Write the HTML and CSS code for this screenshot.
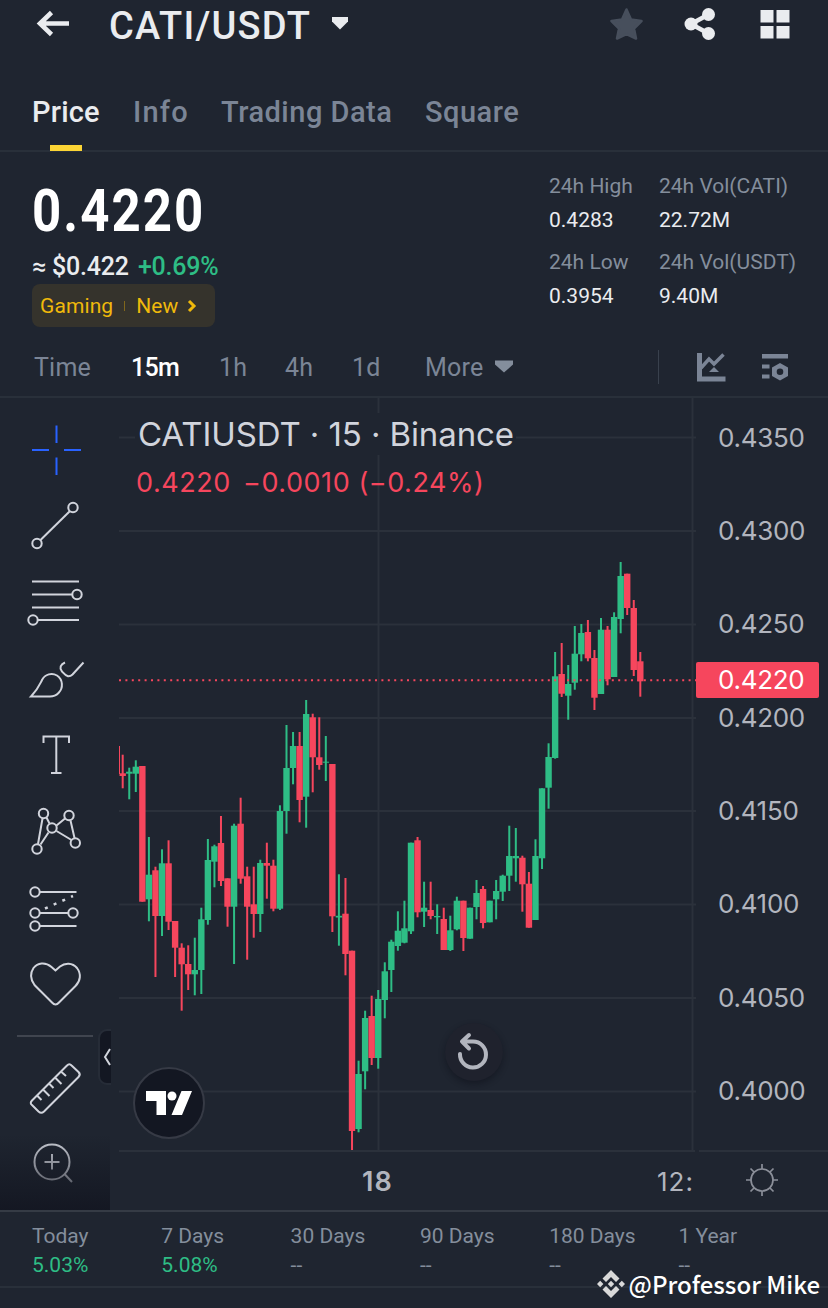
FILE: index.html
```html
<!DOCTYPE html>
<html lang="en">
<head>
    <meta charset="UTF-8">
    <meta name="viewport" content="width=device-width, initial-scale=1.0">
    <title>CATI/USDT</title>
    <link rel="stylesheet" href="styles.css">
</head>
<body>

<header class="topbar">
    <svg class="back" width="34" height="28" viewBox="36 10 34 28"><path d="M69 23.500H40M51.500 12.500L40 23.500L51.500 34.500" fill="none" stroke="#eaecef" stroke-width="4.600"/></svg>
    <h1 class="pair">CATI/USDT</h1>
    <svg class="caret" width="18" height="13" viewBox="0 0 18 13"><path d="M1 0H17V4.500L9 12.500L1 4.500Z" fill="#eaecef"/></svg>
    <div class="actions">
        <svg width="34" height="34" viewBox="609 8 34 34"><path d="M625.500 9.500L630 19.500L640.500 21L633 28.500L635 38.500L625.500 34L616 38.500L618 28.500L610.500 21L621 19.500Z" fill="#474f5c" stroke="#474f5c" stroke-width="2.500" stroke-linejoin="round"/></svg>
        <svg width="34" height="34" viewBox="684 8 34 34"><path d="M708.500 14.500L691 24L708.500 33.500" fill="none" stroke="#eaecef" stroke-width="4.500"/><g fill="#eaecef"><circle cx="708.500" cy="14.500" r="6.500"/><circle cx="691" cy="24" r="6.500"/><circle cx="708.500" cy="33.500" r="6.500"/></g></svg>
        <svg width="34" height="34" viewBox="758 8 34 34"><path d="M760.500 10H773.500V22.500H760.500ZM776.500 10H789.500V22.500H776.500ZM760.500 26H773.500V38.500H760.500ZM776.500 26H789.500V38.500H776.500Z" fill="#eaecef"/></svg>
    </div>
</header>

<nav class="tabs">
    <span class="tab active">Price</span>
    <span class="tab info">Info</span>
    <span class="tab">Trading Data</span>
    <span class="tab">Square</span>
</nav>

<section class="summary">
    <div class="quote">
        <div class="last">0.4220</div>
        <div class="fiat">≈ $0.422 <span class="up">+0.69%</span></div>
        <div class="tags">
            <span>Gaming</span><i class="tag-line"></i><span>New</span>
            <svg width="10" height="14" viewBox="0 0 10 14"><path d="M2 2L7 7L2 12" fill="none" stroke="#f0b90b" stroke-width="3"/></svg>
        </div>
    </div>
    <dl class="stats">
        <div><dt>24h High</dt><dd>0.4283</dd></div>
        <div><dt>24h Vol(CATI)</dt><dd>22.72M</dd></div>
        <div><dt>24h Low</dt><dd>0.3954</dd></div>
        <div><dt>24h Vol(USDT)</dt><dd>9.40M</dd></div>
    </dl>
</section>

<div class="intervals">
    <span>Time</span>
    <span class="selected">15m</span>
    <span>1h</span>
    <span>4h</span>
    <span>1d</span>
    <span class="more">More <svg width="18" height="13" viewBox="0 0 18 13"><path d="M0 0.500H18V4.500L9 12.500L0 4.500Z" fill="#848e9c"/></svg></span>
    <span class="interval-icons">
        <svg width="30" height="30" viewBox="696 351 30 30" fill="none" stroke="#7b8596"><path d="M699.500 352V378H725.500" stroke-width="5"/><path d="M701 367L709 358L714 363L723.500 353.500" stroke-width="3.500"/><path d="M709 371L714 366L719 371Z" fill="#7b8596" stroke="none"/></svg>
        <svg width="30" height="30" viewBox="761 351 30 30" fill="#7b8596"><path d="M762 353H788V357.500H762ZM762 363.500H769.500V367.500H762ZM762 373.500H769.500V377.500H762Z"/><path fill-rule="evenodd" d="M780 362L788 366.500V375L780 379.500L772 375V366.500ZM780 367.500A3.300 3.300 0 1 0 780 374.100A3.300 3.300 0 1 0 780 367.500Z"/></svg>
    </span>
</div>

<main class="chart">
    <aside class="tools">
        <svg class="cross" viewBox="0 412 111 76"><path d="M56.500 425.500V443M56.500 457.500V475M32 450H49M64 450H81"/></svg>
        <svg viewBox="0 488 111 76"><path d="M40.500 540L70 511"/><circle cx="37" cy="543.500" r="4.700"/><circle cx="73" cy="507.500" r="4.700"/></svg>
        <svg viewBox="0 564 111 76"><path d="M32 581.500H79M32 594.500H72M32 607.500H79M38 620H79"/><circle cx="77" cy="594.500" r="4.700"/><circle cx="33" cy="620" r="4.700"/></svg>
        <svg viewBox="0 640 111 76"><path d="M31 696.500C38 689 39 686 42 680C45 674 52 672.500 57 675.500C63 679.500 63.500 688 58.500 693C56 695.500 53.500 696.500 50 696.500ZM65 662.500C60.500 664.500 59 668 62 671.500C64 673.500 65 675.500 68 676.300Q70.500 676.500 72.500 674.500L83.500 662.500"/></svg>
        <svg viewBox="0 716 111 76"><path d="M43.500 743V736.500H69V743M56.300 736.500V773M51 773H61.500"/></svg>
        <svg viewBox="0 792 111 76"><path d="M42.500 818.500L38 844M46.500 817.500L49.500 823.500M56.500 825.500L65 818.500M70.500 820.500L74.500 838M71.500 840L56.500 831M48.500 832.500L40.500 844.500"/><circle cx="43.500" cy="813.500" r="4.700"/><circle cx="69" cy="815.500" r="4.700"/><circle cx="52" cy="828" r="4.700"/><circle cx="37" cy="849" r="4.700"/><circle cx="75.300" cy="843" r="4.700"/></svg>
        <svg viewBox="0 868 111 76"><path d="M40 892H76.500M40 913H68M40 926H76.500"/><path d="M45 908.500L73 896" stroke-width="2.500" stroke-dasharray="3 6.500"/><circle cx="35" cy="892" r="4.700"/><circle cx="35" cy="913" r="4.700"/><circle cx="35" cy="926" r="4.700"/><circle cx="73" cy="913" r="4.700"/></svg>
        <svg viewBox="0 944 111 76"><path d="M55.500 970.500L51.500 967C45 961.500 37.500 963 33.500 968C29.500 974 30.500 979.500 34.500 985L52 1002.500Q55.500 1006.500 59 1002.500L75.500 986C80.500 981 81.500 974 77 968C72.500 962.500 65 962.500 60 966.500Z"/></svg>
        <hr>
        <svg viewBox="0 1050 111 76"><path d="M32 1100.500L67 1065.500Q69.300 1063 71.600 1065.500L78.500 1072Q81 1074.500 78.500 1077L44 1111.500Q41.300 1114 38.500 1111.500L32 1105Q29.500 1103 32 1100.500ZM37.500 1096L41.500 1100M43.500 1090L49.500 1096M49.500 1084L53.500 1088M55.500 1078L61.500 1084M61.500 1072L66 1076"/></svg>
        <svg viewBox="0 1126 111 76"><circle cx="52" cy="1162" r="17.500"/><path d="M64.500 1174L72 1182M52 1154V1169.500M44.500 1162H59.500"/></svg>
        <div class="fade"></div>
        <div class="collapse"><svg viewBox="0 0 13 56"><path d="M12 20L7 28L12 36"/></svg></div>
    </aside>

    <div class="plot">
        <svg class="candles" id="candles" width="717" height="812" viewBox="111 398 717 812">
            <path class="grid" d="M119 437.500H696M119 531H696M119 624.500H696M119 718H696M119 811H696M119 904.500H696M119 998H696M119 1091.500H696M378.500 398V1150M692.500 398V1151M119 1151H695M699 1151H828"/>
        </svg>
        <div class="legend">
            <div class="symbol">CATIUSDT · 15 · Binance</div>
            <div class="change"><span>0.4220</span> <span>−0.0010 (−0.24%)</span></div>
        </div>
        <div class="scale">
            <span>0.4350</span>
            <span>0.4300</span>
            <span>0.4250</span>
            <span>0.4200</span>
            <span>0.4150</span>
            <span>0.4100</span>
            <span>0.4050</span>
            <span>0.4000</span>
        </div>
        <div class="price-tag">0.4220</div>
        <div class="tv-logo"><svg width="46" height="24" viewBox="0 0 46 24" fill="#fff"><path d="M0 0H20V24H10.500V10H0ZM35.500 0H46L36 24H25.500Z"/><circle cx="26" cy="5" r="4.500"/></svg></div>
        <div class="reset"><svg width="36" height="40" viewBox="0 0 36 40" fill="none" stroke="#b2b5be" stroke-width="4" stroke-linecap="round" stroke-linejoin="round"><path d="M4 22A13 13 0 1 0 17 9.500H6M13 3L6 9.500L13 16.500"/></svg></div>
        <div class="time-scale">
            <b>18</b>
            <span>12:</span>
            <svg width="34" height="34" viewBox="0 0 34 34" fill="none" stroke="#8b8f99" stroke-width="1.700"><circle cx="17" cy="17" r="11"/><path d="M17 6V1M17 28V33M6 17H1M28 17H33M9 9L5.500 5.500M25 9L28.500 5.500M9 25L5.500 28.500M25 25L28.500 28.500"/></svg>
        </div>
    </div>
</main>

<section class="performance">
    <div><span>Today</span><span class="up">5.03%</span></div>
    <div><span>7 Days</span><span class="up">5.08%</span></div>
    <div><span>30 Days</span><span class="none">--</span></div>
    <div><span>90 Days</span><span class="none">--</span></div>
    <div><span>180 Days</span><span class="none">--</span></div>
    <div><span>1 Year</span><span class="none">--</span></div>
</section>

<div class="author">
    <svg width="28" height="28" viewBox="0 0 28 28" fill="#d9d9d9"><path d="M14 0L22.500 8.500L19 12L14 7L9 12L5.500 8.500ZM14 28L22.500 19.500L19 16L14 21L9 16L5.500 19.500ZM3.200 10.800L6.400 14L3.200 17.200L0 14ZM24.800 10.800L28 14L24.800 17.200L21.600 14ZM14 10.800L17.200 14L14 17.200L10.800 14Z"/></svg>
    <span>@Professor Mike</span>
</div>

<script src="chart.js"></script>
</body>
</html>
```
FILE: styles.css
```css
* { margin: 0; padding: 0; box-sizing: border-box; }
body { width: 828px; height: 1308px; overflow: hidden; position: relative; background: #1f2530; color: #848e9c; font-family: Roboto, sans-serif; }
svg { display: block; flex: none; }
.up { color: #2ebd85; }

.topbar { display: flex; align-items: center; height: 50px; padding: 0 36px; }
.back { margin-top: -3px; }
.pair { width: 224px; margin-left: 39px; font-size: 38px; line-height: 50px; font-weight: 500; letter-spacing: 1.2px; padding-top: 2px; color: #eaecef; white-space: nowrap; }
.caret { margin-top: -4px; margin-left: -2px; }
.actions { display: flex; gap: 40px; margin-left: auto; }

.tabs { display: grid; grid-template-columns: 100px 89px 204px 100px; align-items: center; height: 102px; padding: 24px 32px 0; border-bottom: 2px solid #29303a; font-size: 29px; font-weight: 500; white-space: nowrap; }
.tab { height: 76px; line-height: 77px; letter-spacing: 0.5px; color: #7b8596; }
.tab.info { padding-left: 1px; letter-spacing: 1.2px; }
.tab.active { position: relative; color: #eaecef; letter-spacing: 0.2px; }
.tab.active::after { content: ""; position: absolute; left: 18px; bottom: -1px; width: 32px; height: 6px; background: #fcd535; }

.summary { display: flex; height: 186px; }
.quote { width: 549px; padding: 24px 0 0 32px; }
.last { width: 230px; height: 68px; line-height: 69px; font-size: 60px; font-weight: 700; letter-spacing: 2.4px; color: #fff; transform: scaleX(0.85); transform-origin: left; }
.fiat { height: 40px; line-height: 46px; font-size: 25px; font-weight: 500; letter-spacing: -0.2px; color: #eaecef; }
.fiat .up { margin-left: 3px; }
.tags { display: flex; align-items: center; width: 183px; height: 43px; padding-left: 8px; border-radius: 8px; background: #35332c; color: #f0b90b; font-size: 21px; letter-spacing: 0.1px; }
.tag-line { width: 1px; height: 10px; margin: 0 11px; background: #80671c; }
.tags svg { margin-left: 9px; }
.stats { display: grid; grid-template-columns: 110px 160px; grid-auto-rows: 76.5px; padding-top: 15.5px; font-size: 21px; white-space: nowrap; }
.stats dt { height: 34px; line-height: 36px; }
.stats dd { height: 34px; line-height: 36px; color: #eaecef; }

.intervals { display: grid; grid-template-columns: 97px 88px 66px 67px 73px 233px 1fr; align-items: center; height: 60px; padding-left: 34px; border-bottom: 2px solid #29303a; font-size: 25px; letter-spacing: 0.2px; color: #7b8596; }
.selected { color: #fff; font-weight: 500; letter-spacing: -0.7px; }
.more { display: flex; align-items: center; gap: 12px; }
.more svg { margin-top: -2px; }
.interval-icons { display: flex; align-items: center; gap: 35px; height: 34px; padding-left: 37px; border-left: 1px solid #39414d; }

.chart { display: flex; height: 812px; }
.tools { position: relative; width: 111px; padding-top: 14px; }
.tools svg { width: 111px; height: 76px; fill: none; stroke: #d1d4dc; stroke-width: 2; }
.tools .cross { stroke: #2962ff; }
.tools hr { width: 76px; margin: 15px 0 13px 17px; border: 0; border-top: 2px solid #40454f; }
.fade { position: absolute; left: 0; bottom: 0; width: 110px; height: 76px; background: linear-gradient(rgba(19, 22, 33, 0), rgba(19, 22, 33, 0.9)); }
.collapse { position: absolute; left: 98px; top: 631px; width: 13px; height: 56px; border: 2px solid #262c37; border-right: 0; border-radius: 9px 0 0 9px; background: #131722; }
.tools .collapse svg { width: 13px; height: 56px; margin: -2px 0 0 -2px; }

.plot { position: relative; flex: 1; font-family: Inter, sans-serif; color: #b2b5be; }
.grid { fill: none; stroke: #2b313b; stroke-width: 2; }
.green { fill: #2ebd85; }
.red { fill: #f6465d; }
.last-line { stroke: #f6465d; stroke-width: 2; stroke-dasharray: 2 4.4; }
.legend { position: absolute; left: 24px; top: 15px; white-space: nowrap; }
.symbol { width: 381px; height: 42px; padding-left: 3px; line-height: 42px; background: #1f2530; color: #d1d4dc; font-size: 33px; letter-spacing: -0.1px; }
.change { height: 42px; padding-left: 1px; line-height: 55px; color: #f6465d; font-size: 27px; letter-spacing: 0.55px; }
.change span + span { margin-left: 4px; }
.scale { position: absolute; left: 607px; top: -7.5px; display: flex; flex-direction: column; font-size: 26px; letter-spacing: -0.3px; }
.scale span { height: 93.4px; line-height: 93.4px; }
.price-tag { position: absolute; left: 585px; top: 264px; width: 123px; height: 36px; padding-left: 22px; border-radius: 2px; background: #f6465d; color: #fff; font-size: 26px; line-height: 36px; letter-spacing: -0.3px; }
.tv-logo { position: absolute; left: 22px; top: 669px; display: flex; align-items: center; justify-content: center; width: 72px; height: 72px; border: 2px solid #363a45; border-radius: 50%; background: #131722; }
.reset { position: absolute; left: 334px; top: 625px; display: flex; align-items: center; justify-content: center; width: 58px; height: 58px; border-radius: 50%; background: #1f222d; box-shadow: 0 3px 6px rgba(12, 14, 22, 0.45); }
.time-scale { position: absolute; left: 251px; top: 754px; display: flex; align-items: center; height: 58px; font-size: 26px; }
.time-scale b { width: 295px; font-weight: 600; font-size: 27px; letter-spacing: 1.2px; }
.time-scale span { width: 88px; letter-spacing: 1px; }
.time-scale svg { margin-top: -2px; }

.performance { display: grid; grid-template-columns: repeat(6, 129.3px); height: 78px; padding: 10px 0 0 32px; border-top: 2px solid #353b45; border-bottom: 2px solid #29303a; font-size: 21px; line-height: 29px; white-space: nowrap; }
.performance div { display: flex; flex-direction: column; }
.performance .none { height: 20px; line-height: 29px; }

.author { position: absolute; right: 8px; bottom: 9px; display: flex; align-items: center; gap: 4px; height: 30px; color: #fff; font: 500 24px/30px "Noto Sans CJK SC", sans-serif; }
```
FILE: chart.js
```js
// [up, high, low, body top, body bottom]
const candles = [
    [0, 754.7, 788.3, 773.3, 776], [1, 767.7, 799.3, 771.7, 773.7], [1, 760.3, 792, 766.7, 773.7], [0, 766, 901.7, 766, 901.7],
    [1, 837, 921.3, 874.7, 899.3], [0, 866.7, 977, 870.3, 916], [1, 849.3, 936, 863.3, 916], [0, 840.3, 930, 863.3, 921.7],
    [0, 921, 977, 921, 947.7], [0, 943.3, 1010.7, 947.7, 964.3], [0, 945.3, 990, 964, 974.3], [1, 937.7, 995.3, 970, 974.3],
    [1, 907.7, 994, 919.3, 970], [1, 839, 924.7, 860, 920], [1, 844.7, 887.3, 846.3, 861.7], [0, 816, 886, 843, 881],
    [0, 878.3, 926.7, 878.3, 906.7], [1, 823.7, 964, 825.7, 906.7], [0, 797.7, 883.7, 823.7, 878.7], [0, 866.7, 959.7, 876.3, 906.7],
    [0, 866.7, 937.7, 904.3, 914], [1, 859.7, 932, 863, 914], [0, 842.7, 898.7, 863, 865.7], [0, 859.7, 911.3, 865.7, 908.7],
    [1, 805.3, 910, 811, 908.7], [1, 725, 833.7, 768, 811], [1, 732, 784.3, 746, 768], [0, 732, 822.3, 746, 800],
    [1, 700, 827.7, 714, 796.7], [0, 713.7, 792.3, 717.3, 757.3], [0, 717.3, 769.7, 757.3, 765], [1, 736, 781, 761.7, 762.7],
    [0, 764, 932, 764, 916.3], [1, 874.3, 945.7, 915.8, 917.5], [0, 878, 975.3, 913.7, 954], [0, 950.7, 1150, 950.7, 1131],
    [1, 1060.7, 1132.3, 1074, 1129], [1, 1010.7, 1089.3, 1018, 1071.3], [0, 995.7, 1065, 1016, 1058], [1, 990, 1068.7, 999, 1058],
    [1, 962.3, 1018.3, 971.3, 1000], [1, 939.7, 992, 941.7, 970], [1, 911.3, 950.7, 930.7, 946], [1, 900.7, 943.3, 928.3, 942.7],
    [1, 842.7, 934, 842.7, 931.3], [0, 837, 917.3, 840.3, 912.3], [1, 881.7, 927, 907.7, 911.7], [0, 881.7, 919.3, 910, 916],
    [1, 904.3, 934, 916, 917.3], [0, 907.7, 950, 919, 950], [1, 915.7, 951, 930.3, 950], [1, 896.7, 930.3, 900.7, 929.3],
    [0, 900.7, 951, 900.7, 938], [1, 907.7, 938.7, 907.7, 938.7], [1, 880, 919.3, 893, 907], [0, 886, 928.3, 889, 923],
    [1, 900.7, 922.3, 900.7, 922.3], [1, 880, 919.3, 891, 899.3], [1, 874.7, 901, 875.7, 891.7], [1, 825.7, 891, 856, 875.7],
    [1, 828, 881.7, 856, 858.3], [0, 855.7, 911.7, 857.7, 884.3], [0, 872, 927.7, 883.7, 927.7], [1, 839.3, 920, 856, 920],
    [1, 788.3, 869, 788.3, 858.3], [1, 743.3, 808.7, 757, 787.7], [1, 652, 758.7, 676.3, 758], [0, 643, 697, 674, 693.7],
    [1, 665, 719.7, 684, 695.7], [1, 626, 689.7, 653.7, 682.7], [1, 624, 661.3, 633, 654.3], [0, 620, 661.3, 632, 658.3],
    [0, 650, 710, 658, 697.7], [1, 618, 694, 629.7, 694], [0, 626, 685.3, 629.7, 679.3], [1, 612.3, 677, 617, 677],
    [1, 562, 633.3, 576, 619], [0, 573.7, 615, 573.7, 608], [0, 600, 676, 608, 670], [0, 652, 696.7, 661.3, 681.3]
];
const svg = document.getElementById("candles");
const step = 6.552;

function add(tag, attrs) {
    const el = document.createElementNS("http://www.w3.org/2000/svg", tag);
    for (let key in attrs) el.setAttribute(key, attrs[key]);
    svg.appendChild(el);
}

add("rect", { class: "red", x: 119, y: 746, width: 1, height: 28 });
candles.forEach(([up, high, low, top, bottom], i) => {
    const x = 122.7 + i * step;
    const color = up ? "green" : "red";
    add("rect", { class: color, x: x - 1, y: high, width: 2, height: low - high });
    add("rect", { class: color, x: x - 3.2, y: top, width: 6.4, height: bottom - top });
});
add("line", { class: "last-line", x1: 119, x2: 696, y1: 680.3, y2: 680.3 });
```
